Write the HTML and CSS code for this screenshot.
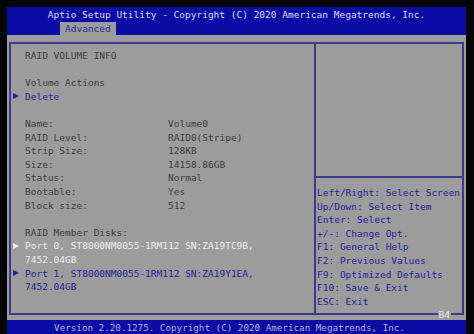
FILE: index.html
```html
<!DOCTYPE html>
<html lang="en">
<head>
    <meta charset="UTF-8">
    <title>Aptio Setup Utility</title>
    <link rel="stylesheet" href="styles.css">
</head>
<body>
    <div class="screen">
        <div class="top">
            <div class="title">Aptio Setup Utility - Copyright (C) 2020 American Megatrends, Inc.</div>
            <div class="tabs"><span class="tab">Advanced</span></div>
        </div>

        <div class="main">
            <div class="frame">
                <div class="left">
                    <div class="row">RAID VOLUME INFO</div>
                    <div class="row"></div>
                    <div class="row">Volume Actions</div>
                    <div class="row link">Delete</div>
                    <div class="row"></div>
                    <div class="row"><span class="key">Name:</span><span>Volume0</span></div>
                    <div class="row"><span class="key">RAID Level:</span><span>RAID0(Stripe)</span></div>
                    <div class="row"><span class="key">Strip Size:</span><span>128KB</span></div>
                    <div class="row"><span class="key">Size:</span><span>14158.86GB</span></div>
                    <div class="row"><span class="key">Status:</span><span>Normal</span></div>
                    <div class="row"><span class="key">Bootable:</span><span>Yes</span></div>
                    <div class="row"><span class="key">Block size:</span><span>512</span></div>
                    <div class="row"></div>
                    <div class="row">RAID Member Disks:</div>
                    <div class="row link selected">Port 0, ST8000NM0055-1RM112 SN:ZA19TC9B,</div>
                    <div class="row selected-text">7452.04GB</div>
                    <div class="row link">Port 1, ST8000NM0055-1RM112 SN:ZA19Y1EA,</div>
                    <div class="row blue">7452.04GB</div>
                </div>
                <div class="right">
                    <div class="help"></div>
                    <div class="keys">
                        <div>Left/Right: Select Screen</div>
                        <div>Up/Down: Select Item</div>
                        <div>Enter: Select</div>
                        <div>+/-: Change Opt.</div>
                        <div>F1: General Help</div>
                        <div>F2: Previous Values</div>
                        <div>F9: Optimized Defaults</div>
                        <div>F10: Save &amp; Exit</div>
                        <div>ESC: Exit</div>
                    </div>
                </div>
                <span class="postcode">B4</span>
            </div>
        </div>

        <div class="bottom">Version 2.20.1275. Copyright (C) 2020 American Megatrends, Inc.</div>
    </div>
</body>
</html>
```

FILE: styles.css
```css
html, body {
    margin: 0;
    padding: 0;
    background: #050505;
}
body {
    font-family: "DejaVu Sans Mono", "Liberation Mono", monospace;
    font-size: 9.5px;
    overflow: hidden;
}
.screen {
    margin: 7px 0 0 7px;
    width: 459px;
}
.top {
    background: #0b0ba6;
    color: #dcdcec;
}
.title {
    height: 15px;
    line-height: 16px;
    text-align: center;
}
.tabs {
    height: 13px;
    padding-left: 53px;
}
.tab {
    display: inline-block;
    height: 13px;
    line-height: 14px;
    padding: 0 5px;
    background: #9c9c9c;
    color: #2a2a9c;
}
.main {
    background: #9c9c9c;
    height: 285px;
    padding: 7px 2px 0 2px;
    box-sizing: border-box;
}
.frame {
    position: relative;
    display: flex;
    height: 273px;
    border: 2px solid #3a3a8e;
    box-sizing: border-box;
}
.left {
    width: 305px;
    border-right: 2px solid #3a3a8e;
    padding: 5px 0 0 14px;
    box-sizing: border-box;
    color: #3c3c3c;
}
.row {
    position: relative;
    display: flex;
    height: 13.6px;
    line-height: 13.6px;
    white-space: pre;
}
.key {
    width: 143px;
}
.link {
    color: #23239a;
}
.link::before {
    content: "";
    position: absolute;
    left: -12px;
    top: 3.5px;
    border-left: 6px solid #23239a;
    border-top: 3.5px solid transparent;
    border-bottom: 3.5px solid transparent;
}
.blue {
    color: #23239a;
}
.selected,
.selected-text {
    color: #ececec;
}
.selected::before {
    border-left-color: #f2f2f2;
}
.right {
    flex: 1;
    display: flex;
    flex-direction: column;
}
.help {
    height: 132px;
    border-bottom: 2px solid #3a3a8e;
}
.keys {
    padding: 8px 0 0 1px;
    color: #23239a;
}
.keys div {
    height: 13.6px;
    line-height: 13.6px;
    white-space: pre;
}
.postcode {
    position: absolute;
    right: 11px;
    bottom: -7px;
    padding: 0 1px;
    background: #9c9c9c;
    color: #e6e6e6;
    line-height: 11px;
}
.bottom {
    background: #0b0ba6;
    color: #b4b4cc;
    height: 14px;
    line-height: 15px;
    font-size: 9.25px;
    text-align: center;
    padding-right: 14px;
}
```
